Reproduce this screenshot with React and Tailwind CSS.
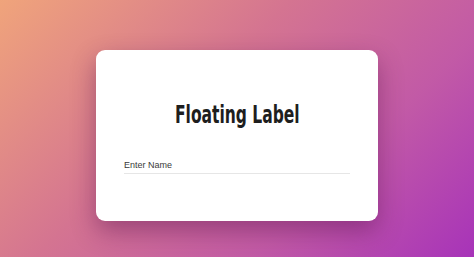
import React, { useState } from 'react';

function App() {
  const [name, setName] = useState('');
  const [focused, setFocused] = useState(false);
  const floating = focused || name.length > 0;

  return (
    <div className="min-h-screen w-full flex items-start justify-center pt-[50px] bg-[linear-gradient(135deg,#f0a47b_0%,#d47491_40%,#c25aa6_70%,#a733b9_100%)]">
      <div className="w-[282px] h-[171px] bg-white rounded-[9px] shadow-[0_10px_25px_rgba(90,20,80,0.45)] px-[28px] pt-[50px]">
        <div className="text-center">
          <h1 className="inline-block scale-x-[0.69] text-[25px] leading-[30px] font-bold text-[#1e1e1e] [font-family:'DejaVu_Sans_Condensed','DejaVu_Sans',sans-serif]">
            Floating Label
          </h1>
        </div>

        <div className="relative mt-[28px]">
          <input
            type="text"
            value={name}
            onChange={(event) => setName(event.target.value)}
            onFocus={() => setFocused(true)}
            onBlur={() => setFocused(false)}
            className="block w-full h-[16px] bg-transparent border-b border-[#e6e6e6] text-[10px] text-[#333] outline-none [font-family:'Liberation_Sans',Arial,sans-serif]"
          />
          <label
            className={
              floating
                ? 'absolute left-0 -top-[10px] text-[8px] text-[#888] pointer-events-none [font-family:\'Liberation_Sans\',Arial,sans-serif]'
                : 'absolute left-0 top-[1px] text-[9px] leading-[12px] text-[#3a3a3a] pointer-events-none [font-family:\'Liberation_Sans\',Arial,sans-serif]'
            }
          >
            Enter Name
          </label>
        </div>
      </div>
    </div>
  );
}

export default App;
